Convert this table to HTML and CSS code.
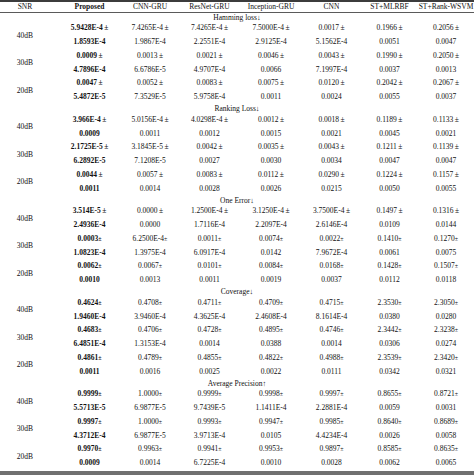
FILE: index.html
```html
<!DOCTYPE html>
<html>
<head>
<meta charset="utf-8">
<link rel="stylesheet" href="styles.css">
</head>
<body>
<table class="res">
<colgroup><col class="c1"><col class="c2"><col class="c3"><col class="c4"><col class="c5"><col class="c6"><col class="c7"><col class="c8"></colgroup>
<thead>
<tr><th class="snr">SNR</th><th class="p">Proposed</th><th>CNN-GRU</th><th>ResNet-GRU</th><th>Inception-GRU</th><th>CNN</th><th>ST+MLRBF</th><th>ST+Rank-WSVM</th></tr>
</thead>
<tbody>
<tr class="t"><td colspan="8">Hamming loss↓</td></tr>
<tr class="a L"><td rowspan="2" class="snr">40dB</td><td class="p">5.9428E-4<i>±</i></td><td>7.4265E-4<i>±</i></td><td>7.4265E-4<i>±</i></td><td>7.5000E-4<i>±</i></td><td>0.0017<i>±</i></td><td>0.1966<i>±</i></td><td>0.2056<i>±</i></td></tr>
<tr class="b"><td class="p">1.8593E-4</td><td>1.9867E-4</td><td>2.2551E-4</td><td>2.9125E-4</td><td>5.1562E-4</td><td>0.0051</td><td>0.0047</td></tr>
<tr class="a L"><td rowspan="2" class="snr">30dB</td><td class="p">0.0009<i>±</i></td><td>0.0013<i>±</i></td><td>0.0021<i>±</i></td><td>0.0046<i>±</i></td><td>0.0043<i>±</i></td><td>0.1990<i>±</i></td><td>0.2050<i>±</i></td></tr>
<tr class="b"><td class="p">4.7896E-4</td><td>6.6786E-5</td><td>4.9707E-4</td><td>0.0066</td><td>7.1997E-4</td><td>0.0037</td><td>0.0013</td></tr>
<tr class="a L"><td rowspan="2" class="snr">20dB</td><td class="p">0.0047<i>±</i></td><td>0.0052<i>±</i></td><td>0.0083<i>±</i></td><td>0.0075<i>±</i></td><td>0.0120<i>±</i></td><td>0.2042<i>±</i></td><td>0.2067<i>±</i></td></tr>
<tr class="b"><td class="p">5.4872E-5</td><td>7.3529E-5</td><td>5.9758E-4</td><td>0.0011</td><td>0.0024</td><td>0.0055</td><td>0.0037</td></tr>

<tr class="t"><td colspan="8">Ranking Loss↓</td></tr>
<tr class="a L"><td rowspan="2" class="snr">40dB</td><td class="p">3.966E-4<i>±</i></td><td>5.0156E-4<i>±</i></td><td>4.0298E-4<i>±</i></td><td>0.0012<i>±</i></td><td>0.0018<i>±</i></td><td>0.1189<i>±</i></td><td>0.1133<i>±</i></td></tr>
<tr class="b"><td class="p">0.0009</td><td>0.0011</td><td>0.0012</td><td>0.0015</td><td>0.0021</td><td>0.0045</td><td>0.0021</td></tr>
<tr class="a L"><td rowspan="2" class="snr">30dB</td><td class="p">2.1725E-5<i>±</i></td><td>3.1845E-5<i>±</i></td><td>0.0042<i>±</i></td><td>0.0035<i>±</i></td><td>0.0043<i>±</i></td><td>0.1211<i>±</i></td><td>0.1139<i>±</i></td></tr>
<tr class="b"><td class="p">6.2892E-5</td><td>7.1208E-5</td><td>0.0027</td><td>0.0030</td><td>0.0034</td><td>0.0047</td><td>0.0047</td></tr>
<tr class="a L"><td rowspan="2" class="snr">20dB</td><td class="p">0.0044<i>±</i></td><td>0.0057<i>±</i></td><td>0.0083<i>±</i></td><td>0.0112<i>±</i></td><td>0.0290<i>±</i></td><td>0.1224<i>±</i></td><td>0.1157<i>±</i></td></tr>
<tr class="b"><td class="p">0.0011</td><td>0.0014</td><td>0.0028</td><td>0.0026</td><td>0.0215</td><td>0.0050</td><td>0.0055</td></tr>

<tr class="t"><td colspan="8">One Error↓</td></tr>
<tr class="a L"><td rowspan="2" class="snr">40dB</td><td class="p">3.514E-5<i>±</i></td><td>0.0000<i>±</i></td><td>1.2500E-4<i>±</i></td><td>3.1250E-4<i>±</i></td><td>3.7500E-4<i>±</i></td><td>0.1497<i>±</i></td><td>0.1316<i>±</i></td></tr>
<tr class="b"><td class="p">2.4936E-4</td><td>0.0000</td><td>1.7116E-4</td><td>2.2097E-4</td><td>2.6146E-4</td><td>0.0109</td><td>0.0144</td></tr>
<tr class="a"><td rowspan="2" class="snr">30dB</td><td class="p">0.0003<i>±</i></td><td>6.2500E-4<i>±</i></td><td>0.0011<i>±</i></td><td>0.0074<i>±</i></td><td>0.0022<i>±</i></td><td>0.1410<i>±</i></td><td>0.1270<i>±</i></td></tr>
<tr class="b"><td class="p">1.0823E-4</td><td>1.3975E-4</td><td>6.0917E-4</td><td>0.0142</td><td>7.9672E-4</td><td>0.0061</td><td>0.0075</td></tr>
<tr class="a"><td rowspan="2" class="snr">20dB</td><td class="p">0.0062<i>±</i></td><td>0.0067<i>±</i></td><td>0.0101<i>±</i></td><td>0.0084<i>±</i></td><td>0.0168<i>±</i></td><td>0.1428<i>±</i></td><td>0.1507<i>±</i></td></tr>
<tr class="b"><td class="p">0.0010</td><td>0.0013</td><td>0.0011</td><td>0.0019</td><td>0.0037</td><td>0.0112</td><td>0.0118</td></tr>

<tr class="t"><td colspan="8">Coverage↓</td></tr>
<tr class="a"><td rowspan="2" class="snr">40dB</td><td class="p">0.4624<i>±</i></td><td>0.4708<i>±</i></td><td>0.4711<i>±</i></td><td>0.4709<i>±</i></td><td>0.4715<i>±</i></td><td>2.3530<i>±</i></td><td>2.3050<i>±</i></td></tr>
<tr class="b"><td class="p">1.9460E-4</td><td>3.9460E-4</td><td>4.3625E-4</td><td>2.4608E-4</td><td>8.1614E-4</td><td>0.0380</td><td>0.0280</td></tr>
<tr class="a"><td rowspan="2" class="snr">30dB</td><td class="p">0.4683<i>±</i></td><td>0.4706<i>±</i></td><td>0.4728<i>±</i></td><td>0.4895<i>±</i></td><td>0.4746<i>±</i></td><td>2.3442<i>±</i></td><td>2.3238<i>±</i></td></tr>
<tr class="b"><td class="p">6.4851E-4</td><td>1.3153E-4</td><td>0.0014</td><td>0.0388</td><td>0.0014</td><td>0.0306</td><td>0.0274</td></tr>
<tr class="a"><td rowspan="2" class="snr">20dB</td><td class="p">0.4861<i>±</i></td><td>0.4789<i>±</i></td><td>0.4855<i>±</i></td><td>0.4822<i>±</i></td><td>0.4988<i>±</i></td><td>2.3539<i>±</i></td><td>2.3420<i>±</i></td></tr>
<tr class="b"><td class="p">0.0011</td><td>0.0016</td><td>0.0025</td><td>0.0022</td><td>0.0111</td><td>0.0342</td><td>0.0321</td></tr>

<tr class="t"><td colspan="8">Average Precision↑</td></tr>
<tr class="a"><td rowspan="2" class="snr">40dB</td><td class="p">0.9999<i>±</i></td><td>1.0000<i>±</i></td><td>0.9999<i>±</i></td><td>0.9998<i>±</i></td><td>0.9997<i>±</i></td><td>0.8655<i>±</i></td><td>0.8721<i>±</i></td></tr>
<tr class="b"><td class="p">5.5713E-5</td><td>6.9877E-5</td><td>9.7439E-5</td><td>1.1411E-4</td><td>2.2881E-4</td><td>0.0059</td><td>0.0031</td></tr>
<tr class="a"><td rowspan="2" class="snr">30dB</td><td class="p">0.9997<i>±</i></td><td>1.0000<i>±</i></td><td>0.9993<i>±</i></td><td>0.9947<i>±</i></td><td>0.9985<i>±</i></td><td>0.8640<i>±</i></td><td>0.8689<i>±</i></td></tr>
<tr class="b"><td class="p">4.3712E-4</td><td>6.9877E-5</td><td>3.9713E-4</td><td>0.0105</td><td>4.4234E-4</td><td>0.0026</td><td>0.0058</td></tr>
<tr class="a"><td rowspan="2" class="snr">20dB</td><td class="p">0.9970<i>±</i></td><td>0.9963<i>±</i></td><td>0.9941<i>±</i></td><td>0.9953<i>±</i></td><td>0.9897<i>±</i></td><td>0.8585<i>±</i></td><td>0.8635<i>±</i></td></tr>
<tr class="b"><td class="p">0.0009</td><td>0.0014</td><td>6.7225E-4</td><td>0.0010</td><td>0.0028</td><td>0.0062</td><td>0.0065</td></tr>
</tbody>
</table>
</body>
</html>
```

FILE: styles.css
```css
html, body {
  margin: 0;
  padding: 0;
  background: #ffffff;
}

.res {
  width: 474px;
  table-layout: fixed;
  border-collapse: collapse;
  font-family: "Liberation Serif", "Times New Roman", serif;
  font-size: 7.5px;
  color: #111111;
  border-top: 2px solid #3c3c3c;
  border-bottom: 4px solid #707070;
}

.c1 { width: 58px; }
.c2 { width: 63px; }
.c3 { width: 58px; }
.c4 { width: 61px; }
.c5 { width: 62px; }
.c6 { width: 59px; }
.c7 { width: 57px; }
.c8 { width: 56px; }

.res th,
.res td {
  padding: 0;
  text-align: center;
  vertical-align: middle;
  line-height: 8px;
  white-space: nowrap;
}

.res .snr {
  padding-right: 8px;
}

.res thead th {
  font-weight: normal;
  height: 10px;
  border-bottom: 1px solid #5a5a5a;
}

.res thead th.p {
  font-weight: bold;
}

.res td.p {
  font-weight: bold;
}

.t td {
  height: 9px;
}

.a td {
  height: 12.5px;
}

.b td {
  height: 15px;
}

.a i {
  font-style: normal;
  font-size: 0.8em;
}

.L i {
  font-size: 1em;
  margin-left: 1.5px;
}
```
